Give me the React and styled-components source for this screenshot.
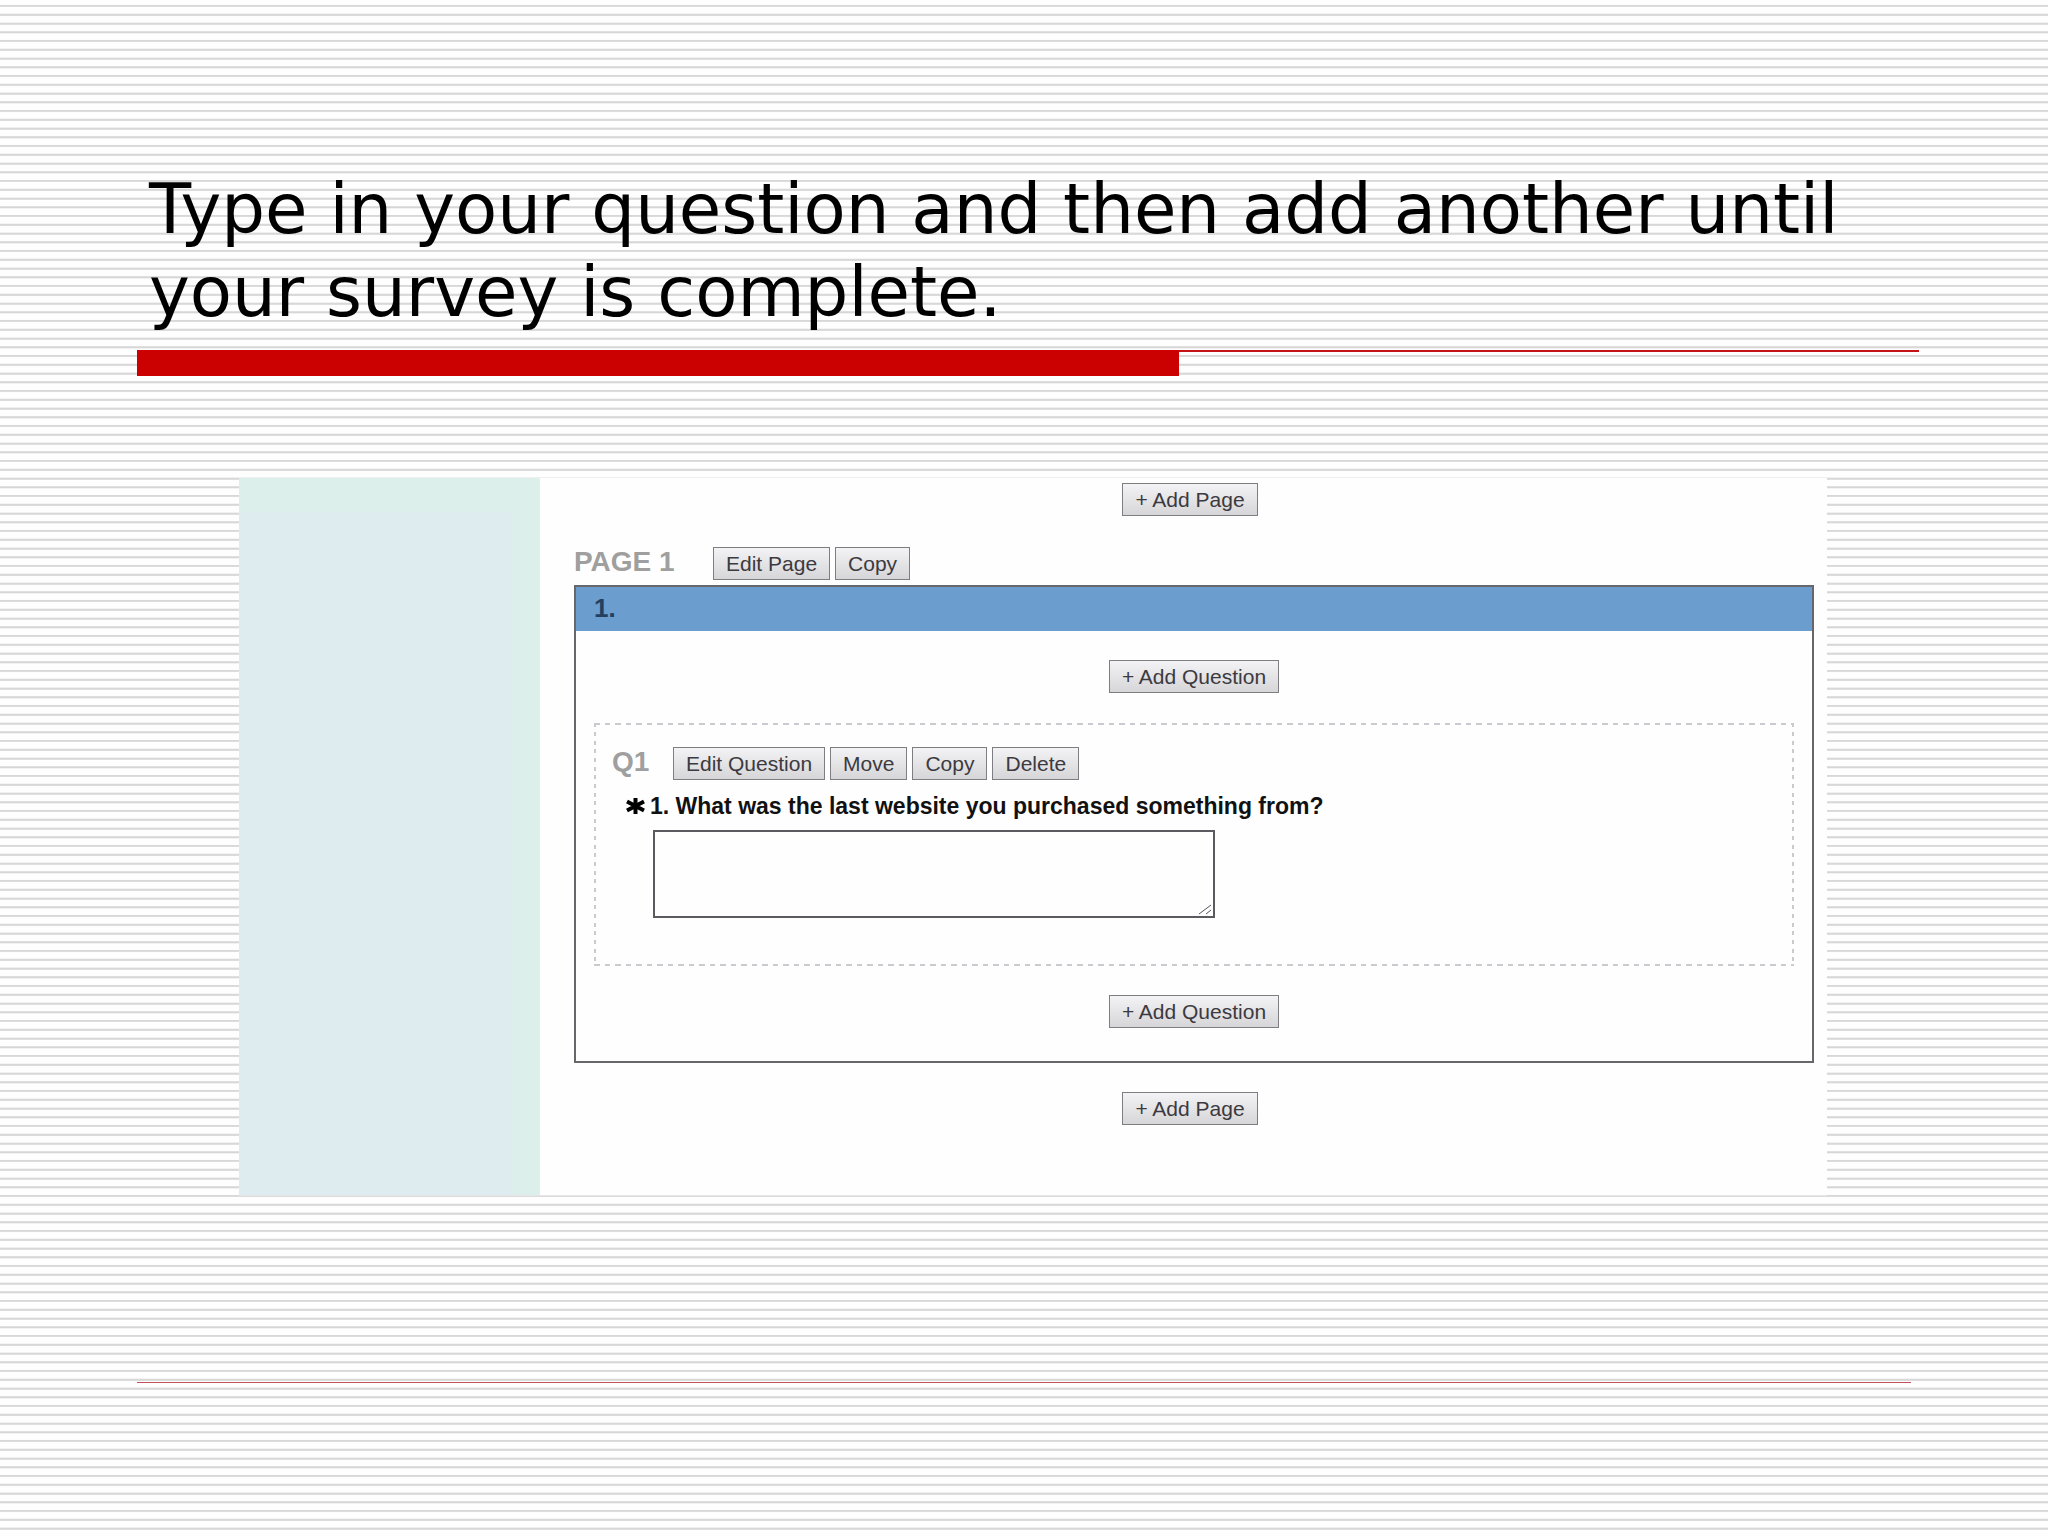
import React, { useState } from 'react';
import styled, { createGlobalStyle } from 'styled-components';

const GlobalStyle = createGlobalStyle`
  * {
    box-sizing: border-box;
  }

  body {
    margin: 0;
    background: #fefefe;
    font-family: "Liberation Sans", Arial, sans-serif;
  }
`;

/* four ruled lines per 35px tile */
const Slide = styled.main`
  min-height: 100vh;
  padding: 168px 129px 153px 137px;
  background-image: linear-gradient(
    transparent 5px, #d8d8d9 5px 6px, #dcdcdd 6px 7px,
    transparent 7px 13px, #f4f4f5 13px 14px, #d8d8d9 14px 15px, #dcdcdd 15px 16px,
    transparent 16px 22px, #f0f0f1 22px 23px, #d8d8d9 23px 24px, #dfdfe0 24px 25px,
    transparent 25px 31px, #e0e0e1 31px 32px, #d6d6d7 32px 33px, #f2f2f3 33px 34px,
    transparent 34px
  );
  background-size: 100% 35px;
`;

const Title = styled.h1`
  margin: 0 0 16px;
  padding-left: 12px;
  font-family: "DejaVu Sans", Verdana, sans-serif;
  font-size: 69px;
  font-weight: 400;
  line-height: 83px;
  color: #000;
`;

const TitleRule = styled.div`
  height: 26px;
  border-top: 2px solid #c41419;
`;

const TitleBar = styled.div`
  width: 1042px;
  max-width: 100%;
  height: 26px;
  margin-top: -2px;
  background: #cb0000;
`;

const Panel = styled.section`
  display: flex;
  min-height: 718px;
  margin: 102px 92px 0 102px;
  background: #fefefe;
  border-bottom: 1px solid #e6e6e8;
`;

const Sidebar = styled.aside`
  width: 301px;
  flex-shrink: 0;
  background: #deecf0;
  border-top: 34px solid #dcefea;
  border-right: 28px solid #dcefea;
`;

const Editor = styled.div`
  flex: 1;
  padding: 5px 13px 0 34px;
`;

const AddRow = styled.div`
  display: flex;
  justify-content: center;
  padding-right: ${(props) => props.$shift || '0'};
`;

const Button = styled.button`
  height: 33px;
  padding: 0 12px;
  border: 1px solid #7e7e82;
  border-radius: 0;
  background: linear-gradient(#f3f2f4, #d6d5d7);
  font-family: inherit;
  font-size: 21px;
  line-height: 31px;
  white-space: nowrap;
  color: #3c3a40;
  cursor: pointer;
`;

const Toolbar = styled.div`
  display: flex;
  align-items: center;
  gap: 5px;
`;

const Label = styled.h2`
  width: ${(props) => props.$width};
  margin: 0;
  padding-bottom: 4px;
  font-size: 28px;
  line-height: 28px;
  color: #a09f9f;
`;

const PageToolbar = styled(Toolbar)`
  margin: 31px 0 5px;
`;

const PageBox = styled.section`
  margin-bottom: 29px;
  padding-bottom: 33px;
  border: 2px solid #67676b;
`;

const PageHeader = styled.h3`
  height: 44px;
  margin: 0 0 29px;
  padding-left: 18px;
  background: #6b9dcf;
  font-size: 26px;
  line-height: 42px;
  color: #24405f;
`;

const dashX = `linear-gradient(90deg, #cbcace 6px, transparent 6px 11px, #cbcace 11px 16px, transparent 16px)`;
const dashY = `linear-gradient(#cbcace 4px, transparent 4px 9px, #cbcace 9px 13px, transparent 13px 18px, #cbcace 18px 22px, transparent 22px)`;

const QuestionBox = styled.div`
  margin: 30px 18px 29px;
  height: 243px;
  padding: 24px 18px;
  background-image: ${dashX}, ${dashX}, ${dashY}, ${dashY};
  background-size: 21px 2px, 21px 2px, 2px 26px, 2px 26px;
  background-position: 0 0, 0 100%, 0 0, 100% 0;
  background-repeat: repeat-x, repeat-x, repeat-y, repeat-y;
`;

const QuestionLabel = styled.label`
  display: flex;
  align-items: center;
  gap: 4px;
  margin: 12px 0 10px 13px;
  font-size: 23px;
  font-weight: 700;
  line-height: 28px;
  color: #111;
`;

const Answer = styled.div`
  position: relative;
  width: 562px;
  max-width: 100%;
  margin-left: 41px;
`;

const AnswerBox = styled.textarea`
  display: block;
  width: 100%;
  height: 88px;
  padding: 8px;
  border: 2px solid #5b5b5f;
  border-radius: 0;
  background: #fefefe;
  font-family: inherit;
  font-size: 21px;
  resize: none;
`;

const Grip = styled.svg`
  position: absolute;
  right: 3px;
  bottom: 3px;
`;

const FooterRule = styled.hr`
  height: 1px;
  margin: 186px 8px 0 0;
  border: 0;
  background: #c4525c;
`;

const questionActions = ['Edit Question', 'Move', 'Copy', 'Delete'];

function RequiredMark() {
  return (
    <svg width="21" height="18" viewBox="0 0 21 18" aria-hidden="true">
      <path
        d="M10.5 1V17M2 4.5L19 13.5M19 4.5L2 13.5"
        stroke="#000"
        strokeWidth="4"
        fill="none"
      />
    </svg>
  );
}

function Question() {
  const [answer, setAnswer] = useState('');

  return (
    <QuestionBox>
      <Toolbar>
        <Label $width="56px">Q1</Label>
        {questionActions.map((action) => (
          <Button key={action} type="button">{action}</Button>
        ))}
      </Toolbar>
      <QuestionLabel htmlFor="answer">
        <RequiredMark />
        1. What was the last website you purchased something from?
      </QuestionLabel>
      <Answer>
        <AnswerBox
          id="answer"
          value={answer}
          onChange={(e) => setAnswer(e.target.value)}
        />
        <Grip width="14" height="11" viewBox="0 0 14 11" aria-hidden="true">
          <path d="M1 10L13 1M8 10L13 6" stroke="#55555a" fill="none" />
        </Grip>
      </Answer>
    </QuestionBox>
  );
}

function App() {
  return (
    <>
      <GlobalStyle />
      <Slide>
        <Title>Type in your question and then add another until your survey is complete.</Title>
        <TitleRule>
          <TitleBar />
        </TitleRule>
        <Panel>
          <Sidebar />
          <Editor>
            <AddRow $shift="8px">
              <Button type="button">+ Add Page</Button>
            </AddRow>
            <PageToolbar>
              <Label $width="134px">PAGE 1</Label>
              <Button type="button">Edit Page</Button>
              <Button type="button">Copy</Button>
            </PageToolbar>
            <PageBox>
              <PageHeader>1.</PageHeader>
              <AddRow>
                <Button type="button">+ Add Question</Button>
              </AddRow>
              <Question />
              <AddRow>
                <Button type="button">+ Add Question</Button>
              </AddRow>
            </PageBox>
            <AddRow $shift="8px">
              <Button type="button">+ Add Page</Button>
            </AddRow>
          </Editor>
        </Panel>
        <FooterRule />
      </Slide>
    </>
  );
}

export default App;
